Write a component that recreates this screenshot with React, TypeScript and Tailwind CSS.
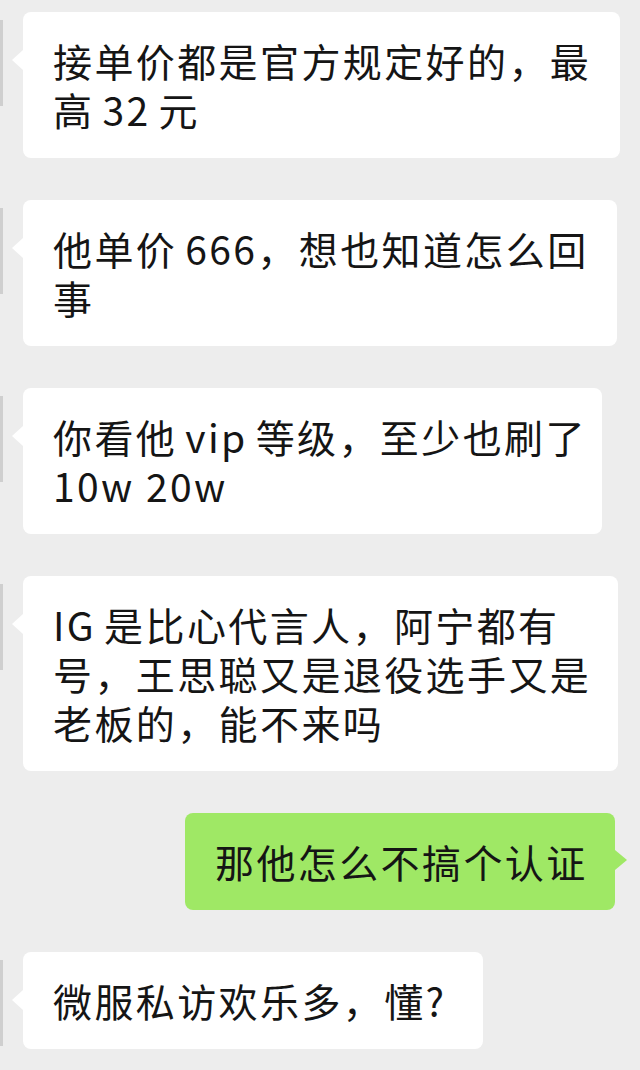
import React from "react";

type Msg = {
  side: "in" | "out";
  lines: string[];
  width: number;
};

// "~" marks the narrow gap the phone puts between CJK and latin text
const messages: Msg[] = [
  { side: "in", lines: ["接单价都是官方规定好的，最", "高~32~元"], width: 597 },
  { side: "in", lines: ["他单价~666，想也知道怎么回", "事"], width: 594 },
  { side: "in", lines: ["你看他~vip~等级，至少也刷了", "10w 20w"], width: 579 },
  {
    side: "in",
    lines: ["IG~是比心代言人，阿宁都有", "号，王思聪又是退役选手又是", "老板的，能不来吗"],
    width: 595,
  },
  { side: "out", lines: ["那他怎么不搞个认证"], width: 430 },
  { side: "in", lines: ["微服私访欢乐多，懂?"], width: 460 },
];

function Line({ text }: { text: string }) {
  const parts = text.split("~");
  return (
    <>
      {parts.map((p, i) => (
        <React.Fragment key={i}>
          {i > 0 && <span className="inline-block w-[8px]" />}
          {p}
        </React.Fragment>
      ))}
    </>
  );
}

function Bubble({ msg }: { msg: Msg }) {
  const incoming = msg.side === "in";
  return (
    <div
      className={`relative rounded-[8px] px-[30px] py-[24px] ${incoming ? "bg-white" : "bg-[#9fe865]"}`}
      style={{ width: msg.width }}
    >
      {/* tail */}
      {incoming ? (
        <span className="absolute left-[-11px] top-[38px] h-0 w-0 border-y-[10px] border-r-[11px] border-y-transparent border-r-white" />
      ) : (
        <span className="absolute right-[-12px] top-[37px] h-0 w-0 border-y-[10px] border-l-[12px] border-y-transparent border-l-[#9fe865]" />
      )}
      <p className="whitespace-nowrap text-[39px] leading-[49px] tracking-[2.4px] text-[#151515]">
        {msg.lines.map((line, i) => (
          <React.Fragment key={i}>
            {i > 0 && <br />}
            <Line text={line} />
          </React.Fragment>
        ))}
      </p>
    </div>
  );
}

export default function App() {
  return (
    <div
      className="min-h-[1070px] w-[640px] overflow-hidden bg-[#ededed] pt-[12px]"
      style={{ fontFamily: '"Noto Sans CJK SC", "Noto Sans", sans-serif' }}
    >
      <div className="flex flex-col gap-[42px]">
        {messages.map((msg, i) =>
          msg.side === "in" ? (
            <div key={i} className="flex items-start">
              {/* avatar edge, cut off by the screenshot */}
              <div className="mt-[8px] h-[86px] w-[3px] bg-[#cfcfcf]" />
              <div className="ml-[20px]">
                <Bubble msg={msg} />
              </div>
            </div>
          ) : (
            <div key={i} className="flex items-start justify-end pr-[25px]">
              <Bubble msg={msg} />
            </div>
          )
        )}
      </div>
    </div>
  );
}
